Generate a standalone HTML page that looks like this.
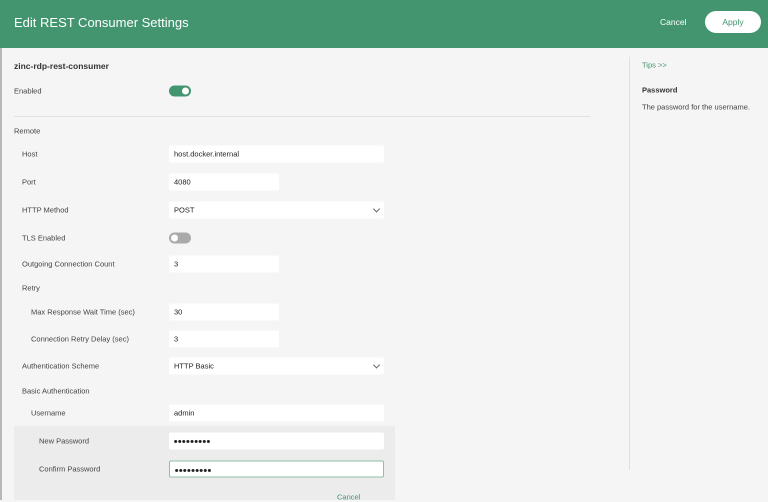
<!DOCTYPE html>
<html><head><style>
*{box-sizing:border-box;margin:0;padding:0}
body{width:768px;height:500px;overflow:hidden;background:#f4f5f4;font-family:"Liberation Sans",sans-serif;position:relative;color:#333}
.hdr{position:absolute;left:0;top:0;width:768px;height:48px;background:#43956f}
.hdr .t{position:absolute;left:14px;top:15px;color:#fff;font-size:13px}
.hdr .c{position:absolute;left:660px;top:17px;color:#fff;font-size:8.5px}
.hdr .a{position:absolute;left:705px;top:11px;width:56px;height:22px;background:#fff;border-radius:11px;color:#43956f;font-size:8.5px;text-align:center;line-height:22px}
.l{position:absolute;font-size:7.5px;color:#444;transform:translateY(-50%);white-space:nowrap}
.in{position:absolute;left:169px;height:17px;background:#fff;border-radius:2px;font-size:7.5px;color:#222;padding-left:5px;line-height:17px;transform:translateY(-50%)}
.w{width:215px}.s{width:110px}
.pw{font-family:"DejaVu Sans",sans-serif;font-size:4px;letter-spacing:0.6px}
.tg{position:absolute;left:169px;width:22px;height:11px;border-radius:6px;transform:translateY(-50%)}
.tg::after{content:"";position:absolute;top:2px;width:7px;height:7px;border-radius:50%;background:#fff}
.on{background:#43956f}.on::after{right:2px}
.off{background:#aaa}.off::after{left:2px}
.chev{position:absolute;right:5px;top:5px;width:5px;height:5px;border-right:1px solid #666;border-bottom:1px solid #666;transform:rotate(45deg)}
</style></head><body>
<div class="hdr"><div class="t">Edit REST Consumer Settings</div><div class="c">Cancel</div><div class="a">Apply</div></div>
<div style="position:absolute;left:0;top:48px;width:2px;height:452px;background:#b8b8b8"></div>
<div style="position:absolute;left:629px;top:57px;width:1px;height:413px;background:#e0e0e0"></div>
<div style="position:absolute;left:14px;top:116px;width:576px;height:1px;background:#e2e2e2"></div>
<div style="position:absolute;left:14px;top:426px;width:381px;height:74px;background:#ebeceb"></div>
<div class="l" style="left:14px;top:66px;font-size:8.5px;font-weight:bold;color:#333">zinc-rdp-rest-consumer</div>
<div class="l" style="left:14px;top:91px">Enabled</div><div class="tg on" style="top:91px"></div>
<div class="l" style="left:14px;top:131px">Remote</div>
<div class="l" style="left:22px;top:154px">Host</div><div class="in w" style="top:154px">host.docker.internal</div>
<div class="l" style="left:22px;top:182px">Port</div><div class="in s" style="top:182px">4080</div>
<div class="l" style="left:22px;top:210px">HTTP Method</div><div class="in w" style="top:210px">POST<span class="chev"></span></div>
<div class="l" style="left:22px;top:238px">TLS Enabled</div><div class="tg off" style="top:238px"></div>
<div class="l" style="left:22px;top:264px">Outgoing Connection Count</div><div class="in s" style="top:264px">3</div>
<div class="l" style="left:22px;top:288px">Retry</div>
<div class="l" style="left:31px;top:312px">Max Response Wait Time (sec)</div><div class="in s" style="top:312px">30</div>
<div class="l" style="left:31px;top:339px">Connection Retry Delay (sec)</div><div class="in s" style="top:339px">3</div>
<div class="l" style="left:22px;top:366px">Authentication Scheme</div><div class="in w" style="top:366px">HTTP Basic<span class="chev"></span></div>
<div class="l" style="left:22px;top:391px">Basic Authentication</div>
<div class="l" style="left:31px;top:413px">Username</div><div class="in w" style="top:413px">admin</div>
<div class="l" style="left:39px;top:441px">New Password</div><div class="in w pw" style="top:441px">●●●●●●●●●</div>
<div class="l" style="left:39px;top:469px">Confirm Password</div><div class="in w pw" style="top:469px;border:1px solid #8fbfa6">●●●●●●●●●</div>
<div class="l" style="left:337px;top:497px;color:#43956f">Cancel</div>
<div class="l" style="left:642px;top:65px;color:#43956f">Tips &gt;&gt;</div>
<div class="l" style="left:642px;top:90px;font-weight:bold;color:#333">Password</div>
<div class="l" style="left:642px;top:107px">The password for the username.</div>
</body></html>
